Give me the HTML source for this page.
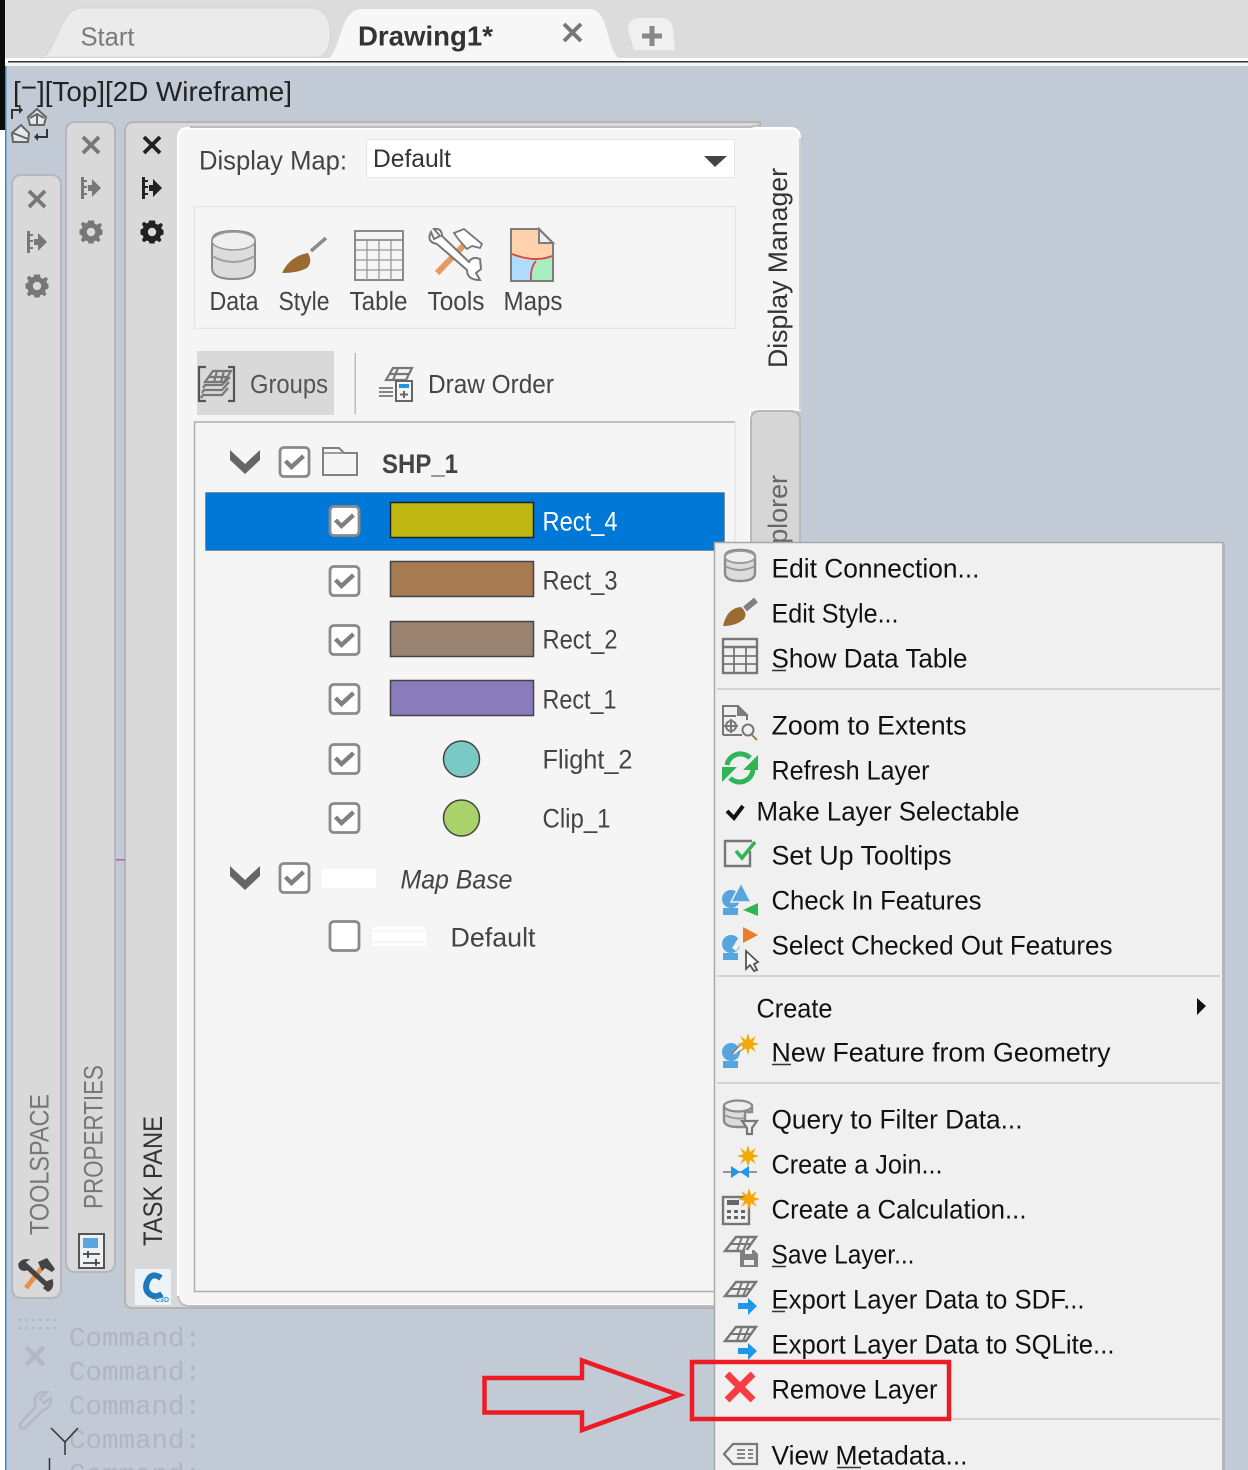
<!DOCTYPE html>
<html><head><meta charset="utf-8"><title>Display Manager context menu</title>
<style>
html,body{margin:0;padding:0;background:#c2cad6}
svg{display:block;filter:blur(.35px)}
text{font-family:"Liberation Sans",sans-serif;white-space:pre}
.m{font-size:27px;fill:#111}
.g{font-size:25.5px;fill:#444}
.t{font-size:27px;fill:#444}
.c{font-family:"Liberation Mono",monospace;font-size:27px;fill:#afb6c1}
</style></head><body>
<svg width="1248" height="1470" viewBox="0 0 1248 1470" xmlns="http://www.w3.org/2000/svg">
<defs>
<g id="x"><path d="M-8-8 8 8M8-8-8 8" stroke-width="3.800" fill="none" stroke="currentColor"/></g>
<g id="gear" fill="currentColor">
<path fill-rule="evenodd" d="M-3-11.500H3L3.600-8.300 6-7.300 8.700-9 9-9 11-7 9.200-4.400 10-2.700 11.500-2V2.500L8.700 3.500 8 5.500 9.500 8 7.500 10.300 5 8.500 3 9.300 2.500 11.500H-2.500L-3.200 9.200-5.300 8.500-8 10.200-10.200 8-8.500 5.300-9.300 3.200-11.500 2.500V-2.500L-9.300-3.200-8.500-5.300-10.200-8-8-10.200-5.300-8.500-3.500-9.300zM4.200 0A4.200 4.200 0 1 0-4.200 0 4.200 4.200 0 1 0 4.200 0z"/>
</g>
<g id="dock" fill="currentColor"><path d="M-10-11h3v3h3v2h-3v4h3v2h-3v5h3v2h-3v4h-3z"/><path d="M-3-3H1v-6L10 0 1 9V3H-3z"/></g>
<g id="cb"><rect x="-14.500" y="-14.500" width="29" height="29" rx="4" fill="#fff" stroke="#8a8a8a" stroke-width="2.800"/></g>
<g id="ck"><use href="#cb"/><path d="M-9-1-3 5 9-6" fill="none" stroke="#808080" stroke-width="4.400"/></g>
<g id="chev"><path d="M-15-12 0 2 15-12V-2L0 12-15-2z" fill="#666"/></g>
<g id="star"><path d="M0-11 2-4 8-8 4.500-2 11 0 4.500 2 8 8 2 4 0 11-2 4-8 8-4.500 2-11 0-4.500-2-8-8-2-4z" fill="#f5a800"/></g>
<g id="plane"><path d="M-8 4 3-10H23L13 4z" fill="none" stroke="#777" stroke-width="2.400"/><path d="M-3-3H19M9-10 4 4M16-10 10 4" fill="none" stroke="#777" stroke-width="2"/></g>
</defs>

<rect width="1248" height="1470" fill="#c2cad6"/>
<!-- left edge -->
<rect x="0" y="130" width="5" height="1340" fill="#fff"/>
<rect x="5" y="62" width="1.500" height="1408" fill="#2d8fd0"/>
<rect x="0" y="0" width="5" height="130" fill="#0c0c0c"/>

<!-- tab bar -->
<rect x="5" y="0" width="1243" height="60" fill="#dcdcdc"/>
<rect x="5" y="58" width="1243" height="8" fill="#fff"/>
<rect x="8" y="61" width="1240" height="1.500" fill="#333"/>
<rect x="5" y="62.500" width="1243" height="3.500" fill="#f4f4f4"/>
<path d="M40 58C58 54 58 8 82 8H312C334 8 336 50 320 57H52z" fill="#ebebeb" stroke="#d4d4d4" stroke-width="1"/>
<path d="M326 60C342 54 338 9 362 9H590C610 9 606 54 622 60z" fill="#f7f7f7"/>
<path d="M628 30Q628 18 640 18H662Q672 18 673 30L675 50H634z" fill="#f0f0f0"/>
<text x="80.500" y="45.500" font-size="26" fill="#7a7a7a" textLength="54" lengthAdjust="spacingAndGlyphs">Start</text>
<text x="358" y="45.500" font-size="28" font-weight="bold" fill="#333" textLength="135" lengthAdjust="spacingAndGlyphs">Drawing1*</text>
<path d="M564 24 581 41M581 24 564 41" stroke="#777" stroke-width="4" fill="none"/>
<path d="M652 26V46M642 36H662" stroke="#888" stroke-width="5" fill="none"/>

<text x="13" y="101" font-size="28" fill="#222" textLength="279" lengthAdjust="spacingAndGlyphs">[<tspan dy="-4">−</tspan><tspan dy="4">]</tspan>[Top][2D Wireframe]</text>
<!-- view icons -->
<g fill="none" stroke="#666" stroke-width="2">
<path d="M28 117 37 109 46 117 44 125H30z" fill="#e4e7ec"/><path d="M30 118 37 114 44 118M37 114V125"/>
<path d="M12 133 21 125 29 133 28 142H13z" fill="#e4e7ec"/><path d="M13 133 28 139"/>
</g>
<path d="M12 119V110H20" fill="none" stroke="#333" stroke-width="2"/><path d="M19 106 23 110 19 114z" fill="#333"/>
<path d="M47 129V137H37" fill="none" stroke="#333" stroke-width="2"/><path d="M38 133 34 137 38 141z" fill="#333"/>

<!-- side panels -->
<path d="M12 1288V185Q12 175 22 175H51Q61 175 61 185V1288Q61 1298 51 1298H22Q12 1298 12 1288z" fill="#d9d9d9" stroke="#b4b8be" stroke-width="2"/>
<path d="M66 1262V132Q66 122 76 122H105Q115 122 115 132V1262Q115 1272 105 1272H76Q66 1272 66 1262z" fill="#d9d9d9" stroke="#b4b8be" stroke-width="2"/>
<path d="M125 1300V132Q125 122 135 122H760V1308H133Q125 1308 125 1300z" fill="#d9d9d9" stroke="#b4b4b4" stroke-width="2"/>
<rect x="116" y="859" width="9" height="1.500" fill="#b060b0"/>

<use href="#x" x="37" y="199" color="#777"/>
<use href="#x" x="91" y="145" color="#777"/>
<use href="#x" x="152" y="145" color="#222"/>
<use href="#dock" x="37" y="242" color="#777"/>
<use href="#dock" x="91" y="188" color="#777"/>
<use href="#dock" x="152" y="188" color="#222"/>
<use href="#gear" x="37" y="286" color="#777"/>
<use href="#gear" x="91" y="232" color="#777"/>
<use href="#gear" x="152" y="232" color="#222"/>

<text transform="translate(48.500 1235) rotate(-90)" font-size="27" fill="#777" textLength="141" lengthAdjust="spacingAndGlyphs">TOOLSPACE</text>
<text transform="translate(102.500 1209) rotate(-90)" font-size="27" fill="#777" textLength="144" lengthAdjust="spacingAndGlyphs">PROPERTIES</text>
<text transform="translate(162 1246) rotate(-90)" font-size="27" fill="#333" textLength="130" lengthAdjust="spacingAndGlyphs">TASK PANE</text>

<!-- toolspace icon -->
<path d="M26 1288 44 1265" stroke="#e8914f" stroke-width="5" fill="none"/>
<path d="M38 1262 47 1258 55 1269 52 1272 45 1268 42 1271z" fill="#444"/>
<path d="M22 1262 L49 1287" stroke="#444" stroke-width="5" fill="none"/>
<path d="M19 1264Q19 1271 26 1270L28 1266 24 1262 28 1260Q22 1259 19 1264zM44 1283 52 1280 Q54 1288 48 1291L44 1288 48 1285z" fill="#444" stroke="#444" stroke-width="1.500"/>
<!-- properties icon -->
<rect x="79" y="1234" width="25" height="34" fill="#eef0f2" stroke="#555" stroke-width="2"/>
<rect x="83" y="1238" width="15" height="10" fill="#5aa5e0"/>
<path d="M83 1254H100M83 1263H100M88 1251V1258M96 1259V1266" stroke="#444" stroke-width="1.800"/>
<!-- C3D icon -->
<rect x="135" y="1269" width="36" height="36" fill="#eef3f7"/>
<path d="M161 1278Q152 1272 148 1280Q143 1290 151 1295Q156 1298 162 1294" fill="none" stroke="#1f78b8" stroke-width="6"/>
<text x="155" y="1302" font-size="7" font-weight="bold" fill="#3d9ad6">C3D</text>

<!-- main panel -->
<path d="M178 1295V138Q178 128 188 128H790Q800 128 800 138V410H750V1300Q750 1305 745 1305H188Q178 1305 178 1295z" fill="#f5f5f5" stroke="#fff" stroke-width="2"/>
<path d="M178 1296Q179 1306 190 1306H750" fill="none" stroke="#bdbdbd" stroke-width="2"/>
<path d="M190 127H750L760 125" fill="none" stroke="#bbb" stroke-width="2"/>
<path d="M800 138V410" stroke="#d0d0d0" stroke-width="2"/>
<path d="M751 560V420Q751 411 760 411H790Q800 411 800 420V560z" fill="#d6d6d6" stroke="#b8b8b8" stroke-width="2"/>
<text transform="translate(787 368) rotate(-90)" font-size="27" fill="#333" textLength="200" lengthAdjust="spacingAndGlyphs">Display Manager</text>
<text transform="translate(787 635) rotate(-90)" font-size="27" fill="#666" textLength="160" lengthAdjust="spacingAndGlyphs">Map Explorer</text>

<text x="199" y="169.500" class="t" textLength="148" lengthAdjust="spacingAndGlyphs">Display Map:</text>
<rect x="366.500" y="139.500" width="368" height="38" fill="#fff" stroke="#e6e6e6"/>
<text x="373" y="167" font-size="25" fill="#333" textLength="78" lengthAdjust="spacingAndGlyphs">Default</text>
<path d="M704 156H727L715 167z" fill="#444"/>

<!-- ribbon -->
<rect x="194.500" y="206.500" width="541" height="122" fill="#f5f5f5" stroke="#e6e6e6" stroke-width="1.500"/>
<g>
<path d="M212 241V268Q212 279 233 279 255 279 255 268V241Q255 231 233 231 212 231 212 241z" fill="#dcdcdc" stroke="#8a8a8a" stroke-width="2"/>
<ellipse cx="233.500" cy="241" rx="21.500" ry="9" fill="#eee" stroke="#999" stroke-width="1.500"/>
<path d="M212 256Q233 268 255 256" fill="none" stroke="#a0a0a0" stroke-width="2"/>
</g>
<path d="M282 273Q290 256 308 253 313 262 307 268 298 273 282 273z" fill="#9a6a32"/>
<path d="M311 251 326 238" stroke="#8a8a8a" stroke-width="3.500"/>
<g fill="none" stroke="#8a8a8a" stroke-width="2">
<rect x="355" y="231" width="48" height="49"/>
<path d="M355 240H403" stroke-width="1.800"/>
<path d="M355 250H403M355 260H403M355 270H403M367 240V280M379 240V280M391 240V280" stroke-width="1.300" stroke="#999"/>
</g>
<path d="M437 273 467 242" stroke="#e49a64" stroke-width="6" fill="none"/>
<path d="M454 233 464 229 482 244 480 248 472 246 467 249 459 240z" fill="#fff" stroke="#777" stroke-width="1.800"/>
<path d="M431 232Q426 242 437 244L467 270Q467 280 480 280L476 273 481 269 480 259Q472 256 469 262L442 236Q442 228 434 229L440 236 434 239z" fill="#fff" stroke="#777" stroke-width="2"/>
<path d="M511 229H539L553 243V281H511z" fill="#ffd2ac" stroke="#7d7d7d" stroke-width="2"/>
<path d="M512 255Q528 262 534 260V281H512z" fill="#aedcff"/>
<path d="M534 260Q545 260 552 255V280H532z" fill="#a8efc0"/>
<path d="M512 254Q535 263 552 256M531 281Q530 268 536 261" fill="none" stroke="#d24848" stroke-width="1.800"/>
<path d="M539 229V243H553z" fill="#eee" stroke="#7d7d7d" stroke-width="2"/>
<path d="M511 229H539L553 243V281H511z" fill="none" stroke="#7d7d7d" stroke-width="2"/>
<text x="209.500" y="310" class="g" textLength="49" lengthAdjust="spacingAndGlyphs">Data</text>
<text x="278.500" y="310" class="g" textLength="51" lengthAdjust="spacingAndGlyphs">Style</text>
<text x="349.500" y="310" class="g" textLength="58" lengthAdjust="spacingAndGlyphs">Table</text>
<text x="427.500" y="310" class="g" textLength="57" lengthAdjust="spacingAndGlyphs">Tools</text>
<text x="503.500" y="310" class="g" textLength="59" lengthAdjust="spacingAndGlyphs">Maps</text>

<!-- groups -->
<rect x="197" y="351" width="137" height="64" fill="#d9d9d9"/>
<path d="M206 367H199V401H206M228 367H234V401H228" fill="none" stroke="#555" stroke-width="2.200"/>
<g fill="none" stroke="#777" stroke-width="2.200">
<path d="M205 382 213 371H231L224 382z"/><path d="M209 377H227M217 371 214 382M224 371 221 382"/>
<path d="M203 388 205 385H222L230 377"/><path d="M202 393 204 390H222L229 382"/><path d="M201 398 203 395H222L228 388"/>
</g>
<rect x="354.500" y="353" width="1.500" height="61" fill="#bdbdbd"/>
<text x="250" y="393" class="g" style="fill:#555" textLength="78" lengthAdjust="spacingAndGlyphs">Groups</text>
<g fill="none" stroke="#777" stroke-width="2.200"><path d="M386 380 393 368H412L406 380z"/><path d="M398 368 393 380M390 374H409"/><path d="M379 388H393M379 392H393M379 396H393" stroke-width="1.800"/></g>
<rect x="396" y="381" width="16" height="20" fill="#f5f5f5" stroke="#666" stroke-width="2"/>
<rect x="399" y="384" width="10" height="4" fill="#2096e8"/>
<path d="M404 391V398M400 394.500H408" stroke="#666" stroke-width="2"/>
<text x="428" y="393" class="g" style="fill:#444" textLength="126" lengthAdjust="spacingAndGlyphs">Draw Order</text>

<!-- tree -->
<path d="M735 422H194.500V1291.500H735" fill="#f5f5f5" stroke="#aeaeae" stroke-width="1.500"/>
<path d="M735 422V545" stroke="#ddd" stroke-width="1"/>
<use href="#chev" x="245" y="462"/>
<use href="#ck" x="294.500" y="462"/>
<path d="M323 475V448H339L344 453H357V475z" fill="none" stroke="#808080" stroke-width="2"/><path d="M323 453H344" stroke="#808080" stroke-width="1.500"/>
<text x="382" y="473" class="t" font-weight="bold" textLength="76" lengthAdjust="spacingAndGlyphs">SHP_1</text>

<rect x="205.500" y="492.500" width="519" height="58" fill="#0078d7" stroke="#7a6a50" stroke-width="1" stroke-dasharray="1 1"/>
<use href="#ck" x="344.500" y="521"/>
<rect x="390.500" y="502.500" width="143" height="35" fill="#c0b812" stroke="#222" stroke-width="1.500"/>
<g transform="translate(-.5 -.5)">
<text x="543" y="531" class="t" style="fill:#fff" textLength="75" lengthAdjust="spacingAndGlyphs">Rect_4</text>
<text x="543" y="590" class="t" textLength="75" lengthAdjust="spacingAndGlyphs">Rect_3</text>
<text x="543" y="649" class="t" textLength="75" lengthAdjust="spacingAndGlyphs">Rect_2</text>
<text x="543" y="709" class="t" textLength="74" lengthAdjust="spacingAndGlyphs">Rect_1</text>
<text x="543" y="769" class="t" textLength="90" lengthAdjust="spacingAndGlyphs">Flight_2</text>
<text x="543" y="828" class="t" textLength="68" lengthAdjust="spacingAndGlyphs">Clip_1</text>
<text x="401" y="889" class="t" font-style="italic" textLength="112" lengthAdjust="spacingAndGlyphs">Map Base</text>
<text x="451" y="947" class="t" textLength="85" lengthAdjust="spacingAndGlyphs">Default</text>
</g>

<use href="#ck" x="344.500" y="581"/>
<rect x="390.500" y="561.500" width="143" height="35" fill="#a67b52" stroke="#444" stroke-width="1.500"/>
<use href="#ck" x="344.500" y="640"/>
<rect x="390.500" y="621.500" width="143" height="35" fill="#998270" stroke="#444" stroke-width="1.500"/>
<use href="#ck" x="344.500" y="699"/>
<rect x="390.500" y="680.500" width="143" height="35" fill="#8a7bbd" stroke="#444" stroke-width="1.500"/>
<use href="#ck" x="344.500" y="759"/>
<circle cx="461.500" cy="759" r="18" fill="#79c9c5" stroke="#444" stroke-width="1.500"/>
<use href="#ck" x="344.500" y="818"/>
<circle cx="461.500" cy="818" r="18" fill="#a9d268" stroke="#444" stroke-width="1.500"/>

<use href="#chev" x="245" y="878"/>
<use href="#ck" x="294.500" y="878"/>
<rect x="322" y="869" width="54" height="19" fill="#fff"/>
<use href="#cb" x="344.500" y="936"/>
<rect x="372" y="927" width="54" height="19" fill="#fff"/>
<path d="M372 931H426M372 942H426" stroke="#eee" stroke-width="1"/>

<!-- command lines -->
<text x="69" y="1346" class="c" textLength="132" lengthAdjust="spacingAndGlyphs">Command:</text>
<text x="69" y="1380" class="c" textLength="132" lengthAdjust="spacingAndGlyphs">Command:</text>
<text x="69" y="1414" class="c" textLength="132" lengthAdjust="spacingAndGlyphs">Command:</text>
<text x="69" y="1448" class="c" textLength="132" lengthAdjust="spacingAndGlyphs">Command:</text>
<text x="69" y="1482" class="c" textLength="132" lengthAdjust="spacingAndGlyphs">Command:</text>
<path d="M18 1320H58M18 1328H58" stroke="#b2b9c4" stroke-width="2.500" stroke-dasharray="3 4"/>
<path d="M26 1347 44 1365M44 1347 26 1365" stroke="#b2b9c4" stroke-width="4.500" fill="none"/>
<path d="M20 1424 36 1406Q32 1396 42 1392L47 1392 40 1398 44 1403 51 1398Q52 1407 42 1411L25 1428Q19 1430 20 1424z" fill="none" stroke="#b2b9c4" stroke-width="2.500"/>
<path d="M51 1428 65 1442 78 1428M65 1442V1455M49.500 1458V1470" fill="none" stroke="#333" stroke-width="1.500"/>

<!-- context menu -->
<rect x="714.500" y="542.500" width="508.500" height="940" fill="#f0f0f0" stroke="#a8a8a8" stroke-width="1.500"/>
<rect x="1223" y="544" width="2" height="926" fill="#aeb4bc"/>
<path d="M717 689H1220M717 976H1220M717 1083H1220M717 1419H1220" stroke="#c8c8c8" stroke-width="1.500"/>

<g transform="translate(-.5 -.5)">
<text x="772" y="578" class="m" textLength="208" lengthAdjust="spacingAndGlyphs">Edit Connection...</text>
<text x="772" y="623" class="m" textLength="127" lengthAdjust="spacingAndGlyphs">Edit Style...</text>
<text x="772" y="668" class="m" textLength="196" lengthAdjust="spacingAndGlyphs">Show Data Table</text>
<text x="772" y="735" class="m" textLength="195" lengthAdjust="spacingAndGlyphs">Zoom to Extents</text>
<text x="772" y="780" class="m" textLength="158" lengthAdjust="spacingAndGlyphs">Refresh Layer</text>
<text x="757" y="821" class="m" textLength="263" lengthAdjust="spacingAndGlyphs">Make Layer Selectable</text>
<text x="772" y="865" class="m" textLength="180" lengthAdjust="spacingAndGlyphs">Set Up Tooltips</text>
<text x="772" y="910" class="m" textLength="210" lengthAdjust="spacingAndGlyphs">Check In Features</text>
<text x="772" y="955" class="m" textLength="341" lengthAdjust="spacingAndGlyphs">Select Checked Out Features</text>
<text x="757" y="1018" class="m" textLength="76" lengthAdjust="spacingAndGlyphs">Create</text>
<text x="772" y="1062" class="m" textLength="339" lengthAdjust="spacingAndGlyphs">New Feature from Geometry</text>
<text x="772" y="1129" class="m" textLength="251" lengthAdjust="spacingAndGlyphs">Query to Filter Data...</text>
<text x="772" y="1174" class="m" textLength="171" lengthAdjust="spacingAndGlyphs">Create a Join...</text>
<text x="772" y="1219" class="m" textLength="255" lengthAdjust="spacingAndGlyphs">Create a Calculation...</text>
<text x="772" y="1264" class="m" textLength="143" lengthAdjust="spacingAndGlyphs">Save Layer...</text>
<text x="772" y="1309" class="m" textLength="313" lengthAdjust="spacingAndGlyphs">Export Layer Data to SDF...</text>
<text x="772" y="1354" class="m" textLength="343" lengthAdjust="spacingAndGlyphs">Export Layer Data to SQLite...</text>
<text x="772" y="1399" class="m" textLength="166" lengthAdjust="spacingAndGlyphs">Remove Layer</text>
<text x="772" y="1465" class="m" textLength="196" lengthAdjust="spacingAndGlyphs">View Metadata...</text>
</g>
<!-- mnemonics -->
<path d="M772 670.500H786M772 1064.500H791M772 1266.500H786M772 1311.500H785M837 1467.500H861" stroke="#333" stroke-width="1.500"/>
<path d="M1197 998 1206 1006 1197 1015z" fill="#111"/>

<!-- menu icons -->
<g>
<path d="M725 557V573Q725 581 740 581 755 581 755 573V557Q755 550 740 550 725 550 725 557z" fill="#dcdcdc" stroke="#8a8a8a" stroke-width="2.400"/>
<ellipse cx="740" cy="557" rx="15" ry="6" fill="#eee" stroke="#999" stroke-width="1.800"/>
<path d="M725 566Q740 574 755 566" fill="none" stroke="#999" stroke-width="2"/>
</g>
<path d="M723 626Q727 608 741 607 748 613 744 619 736 626 723 626z" fill="#9a6a32"/>
<path d="M745 609 756 600" stroke="#808080" stroke-width="6"/>
<g fill="none" stroke="#777"><rect x="723" y="639" width="34" height="34" stroke-width="2.400"/><path d="M723 647H757" stroke-width="2.400"/><path d="M723 656H757M723 664H757M734 647V673M746 647V673" stroke-width="1.800"/></g>

<g fill="none" stroke="#777" stroke-width="2"><path d="M723 735V706H738L747 715V720M738 706V715H747"/><path d="M723 735H742M723 716H736"/><circle cx="731" cy="726" r="5"/><path d="M724 726H738M731 719V733"/></g>
<path d="M738 707 746 715H738z" fill="#808080"/>
<circle cx="748" cy="730" r="5.500" fill="#f0f0f0" stroke="#777" stroke-width="2"/><path d="M752 735 757 740" stroke="#a08050" stroke-width="2"/>

<!-- refresh -->
<g fill="none" stroke="#2fb457" stroke-width="5"><path d="M727 765A13.500 13.500 0 0 1 750 758"/><path d="M753 770A13.500 13.500 0 0 1 730 778"/></g>
<path d="M758 755V770H743z" fill="#2fb457"/><path d="M722 782V767H737z" fill="#2fb457"/>
<path d="M727 811 734 818 743 806" fill="none" stroke="#111" stroke-width="4"/>
<path d="M752 841H725V866H750V851" fill="none" stroke="#777" stroke-width="2.400"/>
<path d="M736 851 742 858 755 842" fill="none" stroke="#2fb457" stroke-width="3.600"/>

<!-- check in -->
<circle cx="731" cy="899" r="9" fill="#56a5de"/><rect x="723" y="908" width="15" height="7" fill="#56a5de"/>
<path d="M741 883 751 902H731z" fill="#56a5de" stroke="#f0f0f0" stroke-width="1.500"/>
<path d="M758 903V916L743 910z" fill="#2fb457"/>
<!-- select checked out -->
<circle cx="731" cy="944" r="9" fill="#56a5de"/><rect x="723" y="953" width="15" height="7" fill="#56a5de"/>
<path d="M739 937 744 940 736 951 732 948z" fill="#f0f0f0"/>
<path d="M743 927 758 935 743 943z" fill="#ea7c2a"/><path d="M746 951V969L750 965 754 971 757 970 754 964 758 962z" fill="#fff" stroke="#555" stroke-width="1.800"/>
<!-- new feature -->
<circle cx="731" cy="1052" r="9" fill="#56a5de"/><rect x="723" y="1061" width="15" height="7" fill="#56a5de"/>
<path d="M731 1055 741 1044 745 1048 737 1053" fill="#f0f0f0" stroke="#777" stroke-width="1.200"/>
<use href="#star" x="748" y="1044"/>

<!-- query -->
<path d="M724 1106V1120Q724 1127 738 1127H745V1112H752V1106Z" fill="#dcdcdc" stroke="#8a8a8a" stroke-width="2.400"/>
<ellipse cx="738" cy="1106" rx="14" ry="5.500" fill="#eee" stroke="#8a8a8a" stroke-width="2.200"/>
<path d="M724 1115Q736 1120 744 1118" fill="none" stroke="#999" stroke-width="1.800"/>
<path d="M742 1121H757L752 1128V1134L747 1134V1128z" fill="#f0f0f0" stroke="#777" stroke-width="2.200"/>

<use href="#star" x="748" y="1156"/>
<path d="M723 1172H757" stroke="#777" stroke-width="1.500"/>
<path d="M731 1166 740 1172 731 1178zM749 1166 740 1172 749 1178z" fill="#2096e8"/>

<rect x="723" y="1197" width="26" height="27" fill="#f0f0f0" stroke="#777" stroke-width="2.400"/>
<rect x="727" y="1200" width="12" height="5" fill="#666"/>
<path d="M727 1210h4v3h-4zM734 1210h4v3h-4zM741 1210h4v3h-4zM727 1216h4v3h-4zM734 1216h4v3h-4zM741 1216h4v3h-4z" fill="#666"/>
<use href="#star" x="749" y="1199"/>

<use href="#plane" x="733" y="1247"/>
<path d="M740 1250H754L758 1254V1267H740z" fill="#808080"/><rect x="745" y="1250" width="7" height="4" fill="#f0f0f0"/><rect x="744" y="1260" width="10" height="5" fill="#f0f0f0"/>
<use href="#plane" x="733" y="1292"/>
<path d="M738 1303H748V1298L757 1306 748 1315V1309H738z" fill="#2096e8"/>
<use href="#plane" x="733" y="1337"/>
<path d="M738 1348H748V1343L757 1351 748 1360V1354H738z" fill="#2096e8"/>

<path d="M727 1374 753 1400M753 1374 727 1400" stroke="#f73c44" stroke-width="7" fill="none"/>
<path d="M757 1444H733L724 1454 733 1464H757z" fill="#f0f0f0" stroke="#777" stroke-width="2.200"/>
<path d="M737 1450H745M748 1450H753M737 1454H745M748 1454H753M737 1458H745M748 1458H753" stroke="#777" stroke-width="1.800"/>

<!-- annotations -->
<rect x="692" y="1362" width="257" height="57" fill="none" stroke="#ed1c24" stroke-width="4.500"/>
<path d="M484.500 1378H582V1360.500L679 1395 582 1430V1412.500H484.500z" fill="none" stroke="#ed1c24" stroke-width="4.500"/>
</svg>
</body></html>
